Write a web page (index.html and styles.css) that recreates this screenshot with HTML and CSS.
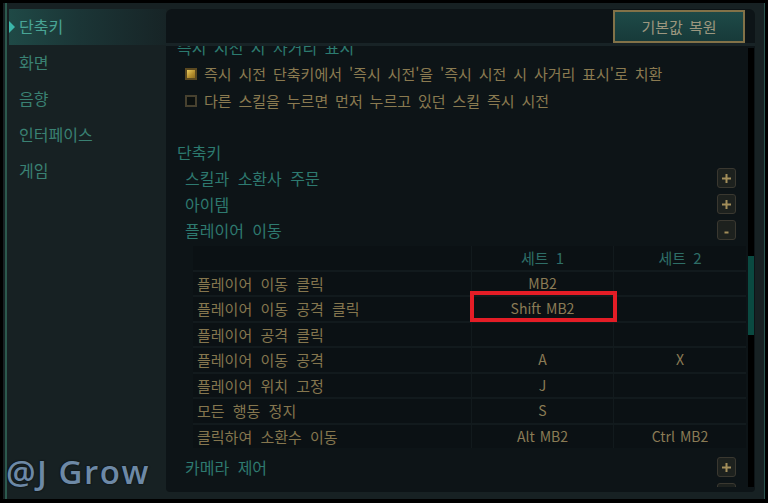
FILE: index.html
```html
<!DOCTYPE html>
<html lang="ko">
<head>
    <meta charset="UTF-8">
    <meta name="viewport" content="width=device-width, initial-scale=1.0">
    <title>설정 - 단축키</title>
    <link rel="stylesheet" href="styles.css">
</head>
<body>
    <div class="window">
        <nav class="sidebar">
            <div class="nav-item active">단축키</div>
            <div class="nav-item">화면</div>
            <div class="nav-item">음향</div>
            <div class="nav-item">인터페이스</div>
            <div class="nav-item">게임</div>
        </nav>

        <main class="panel">
            <div class="panel-head">
                <button class="reset-btn">기본값 복원</button>
            </div>
            <div class="panel-body">
                <div class="scroll-area">
                    <div class="scroll-inner">
                        <div class="section-title">즉시 시전 시 사거리 표시</div>
                        <div class="check-row">
                            <span class="box checked"></span>
                            <span>즉시 시전 단축키에서 '즉시 시전'을 '즉시 시전 시 사거리 표시'로 치환</span>
                        </div>
                        <div class="check-row">
                            <span class="box"></span>
                            <span>다른 스킬을 누르면 먼저 누르고 있던 스킬 즉시 시전</span>
                        </div>

                        <div class="section-title spaced">단축키</div>
                        <div class="group-row">
                            <span>스킬과 소환사 주문</span>
                            <button class="toggle-btn"><svg width="9" height="9" viewBox="0 0 9 9"><path d="M0 4.5h9M4.5 0v9" stroke="currentColor" stroke-width="2"/></svg></button>
                        </div>
                        <div class="group-row">
                            <span>아이템</span>
                            <button class="toggle-btn"><svg width="9" height="9" viewBox="0 0 9 9"><path d="M0 4.5h9M4.5 0v9" stroke="currentColor" stroke-width="2"/></svg></button>
                        </div>
                        <div class="group-row">
                            <span>플레이어 이동</span>
                            <button class="toggle-btn"><svg width="9" height="9" viewBox="0 0 9 9"><path d="M2.5 6.5h4" stroke="currentColor" stroke-width="2"/></svg></button>
                        </div>

                        <div class="keytable">
                            <div class="cell head"></div>
                            <div class="cell head val">세트 1</div>
                            <div class="cell head val">세트 2</div>

                            <div class="cell">플레이어 이동 클릭</div>
                            <div class="cell val">MB2</div>
                            <div class="cell val"></div>

                            <div class="cell">플레이어 이동 공격 클릭</div>
                            <div class="cell val marked">Shift MB2</div>
                            <div class="cell val"></div>

                            <div class="cell">플레이어 공격 클릭</div>
                            <div class="cell val"></div>
                            <div class="cell val"></div>

                            <div class="cell">플레이어 이동 공격</div>
                            <div class="cell val">A</div>
                            <div class="cell val">X</div>

                            <div class="cell">플레이어 위치 고정</div>
                            <div class="cell val">J</div>
                            <div class="cell val"></div>

                            <div class="cell">모든 행동 정지</div>
                            <div class="cell val">S</div>
                            <div class="cell val"></div>

                            <div class="cell">클릭하여 소환수 이동</div>
                            <div class="cell val">Alt MB2</div>
                            <div class="cell val">Ctrl MB2</div>
                        </div>

                        <div class="group-row camera">
                            <span>카메라 제어</span>
                            <button class="toggle-btn"><svg width="9" height="9" viewBox="0 0 9 9"><path d="M0 4.5h9M4.5 0v9" stroke="currentColor" stroke-width="2"/></svg></button>
                        </div>
                        <div class="group-row">
                            <span></span>
                            <button class="toggle-btn"><svg width="9" height="9" viewBox="0 0 9 9"><path d="M0 4.5h9M4.5 0v9" stroke="currentColor" stroke-width="2"/></svg></button>
                        </div>
                    </div>
                </div>
                <div class="scrollbar"><div class="thumb"></div></div>
            </div>
        </main>
    </div>

    <div class="watermark">@J Grow</div>
</body>
</html>
```

FILE: styles.css
```css
body {
    margin: 0;
    background-color: #000;
    width: 768px;
    height: 503px;
    overflow: hidden;
    font-family: "Noto Sans CJK KR", "Noto Sans", sans-serif;
    position: relative;
}
.window {
    box-sizing: border-box;
    margin: 3px 0 0 3px;
    width: 762px;
    height: 496px;
    padding: 6px 9px 7px 0;
    display: flex;
    border-right: 1px solid #2a544f;
    background: linear-gradient(90deg, #172123 2px, #2c5a4e 2px, #2c5a4e 4px, #172123 4px);
}
.sidebar {
    width: 163px;
    flex-shrink: 0;
    padding-left: 6px;
    box-sizing: border-box;
}
.nav-item {
    position: relative;
    height: 36px;
    line-height: 35px;
    padding-left: 10px;
    font-size: 16px;
    color: #3a8173;
    word-spacing: 3px;
}
.nav-item.active {
    background: linear-gradient(90deg, #1f4946 0%, #1b3536 45%, #172426 100%);
    color: #49a596;
}
.nav-item.active::before {
    content: "";
    position: absolute;
    left: 0;
    top: 12px;
    border-left: 6px solid #3bb6aa;
    border-top: 6px solid transparent;
    border-bottom: 6px solid transparent;
}
.panel {
    flex: 1;
    display: flex;
    flex-direction: column;
    background-color: #0d1417;
    border-radius: 6px 6px 4px 4px;
    overflow: hidden;
}
.panel-head {
    height: 37px;
    padding: 1px 10px 0 0;
    box-sizing: border-box;
    border-bottom: 3px solid #182326;
    display: flex;
    justify-content: flex-end;
    flex-shrink: 0;
}
.reset-btn {
    width: 132px;
    height: 33px;
    border: 2px solid #827248;
    background: linear-gradient(180deg, #1e4a48, #173a39);
    color: #9c977f;
    font-family: inherit;
    font-size: 15px;
    word-spacing: 2px;
    padding: 0;
    cursor: pointer;
}
.panel-body {
    flex: 1;
    display: flex;
    min-height: 0;
    padding-bottom: 5px;
}
.scroll-area {
    flex: 1;
    overflow: hidden;
    padding: 0 12px 0 11px;
}
.scroll-inner {
    margin-top: -11px;
}
.section-title {
    height: 25px;
    line-height: 25px;
    font-size: 16px;
    color: #2c7a6f;
    word-spacing: 3px;
}
.section-title.spaced {
    margin-top: 25px;
    height: 26px;
    line-height: 26px;
}
.check-row {
    height: 27px;
    display: flex;
    align-items: center;
    gap: 7px;
    margin-left: 8px;
    font-size: 15px;
    color: #8a7a50;
    word-spacing: 2.7px;
    white-space: nowrap;
}
.box {
    width: 12px;
    height: 12px;
    box-sizing: border-box;
    border: 2px solid #47412f;
    background-color: #0b100f;
    flex-shrink: 0;
}
.box.checked {
    border-color: #5b4920;
    background: linear-gradient(135deg, #eacb5e, #b28c2c 60%, #8e6d1f);
}
.group-row {
    height: 26px;
    margin-left: 8px;
    display: flex;
    justify-content: space-between;
    align-items: center;
    font-size: 16px;
    color: #2e7a70;
    word-spacing: 4px;
}
.group-row.camera {
    margin-top: 6px;
}
.toggle-btn {
    width: 19px;
    height: 20px;
    padding: 0;
    border: 1px solid #3a3830;
    border-radius: 3px;
    background-color: #1d211e;
    color: #a38e5a;
    display: flex;
    align-items: center;
    justify-content: center;
    cursor: pointer;
}
.keytable {
    margin: 3px -10px 0 16px;
    display: grid;
    grid-template-columns: 278px 141px 1fr;
    grid-auto-rows: 23.5px;
    gap: 2px 1px;
    background-color: #121a1d;
}
.cell {
    background-color: #0b1114;
    line-height: 23.5px;
    padding-left: 4px;
    font-size: 15px;
    color: #85764e;
    word-spacing: 4px;
    white-space: nowrap;
}
.cell.val {
    padding-left: 0;
    text-align: center;
    color: #8a7b55;
    font-size: 14px;
    word-spacing: 1px;
}
.cell.head {
    color: #2e6e67;
    font-size: 15px;
    word-spacing: 3px;
}
.cell.marked {
    position: relative;
}
.cell.marked::after {
    content: "";
    position: absolute;
    top: -6px;
    left: -2px;
    right: -4px;
    bottom: -1px;
    border: 4px solid #e41d26;
}
.scrollbar {
    width: 6px;
    margin: 2px 1px 0 0;
    background-color: #000;
    flex-shrink: 0;
}
.thumb {
    margin-top: 208px;
    height: 79px;
    background-color: #0a4a41;
}
.watermark {
    position: absolute;
    left: 6px;
    top: 449px;
    font-family: "Open Sans", sans-serif;
    font-weight: 600;
    font-size: 33px;
    letter-spacing: 1.5px;
    color: #6d89a6;
    text-shadow: 0 0 2px #0a0f12, 0 0 1px #0a0f12;
}
```
